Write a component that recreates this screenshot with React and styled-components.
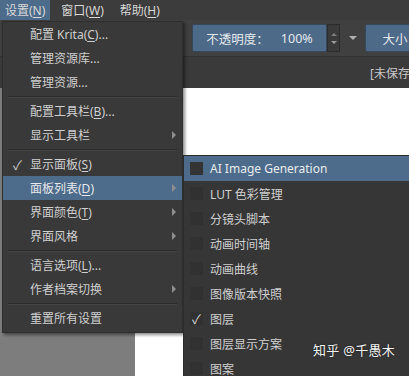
import React from 'react';
import styled, { createGlobalStyle } from 'styled-components';

const GlobalStyle = createGlobalStyle`
  html, body {
    margin: 0;
    padding: 0;
    background: #3c3c3c;
  }
  body {
    font-family: "Noto Sans", "Noto Sans CJK SC", sans-serif;
    font-size: 12px;
    color: #d2d2d2;
  }
`;

const Screen = styled.div`
  position: relative;
  width: 409px;
  height: 376px;
  overflow: hidden;
  display: flex;
  flex-direction: column;
  background: #3c3c3c;
`;

const MenuBar = styled.div`
  height: 20px;
  display: flex;
  align-items: stretch;
  gap: 6px;
  background: #3c3c3c;
`;

const MenuBarItem = styled.div`
  display: flex;
  align-items: center;
  padding: 0 5px;
  background: ${p => (p.$active ? '#4d6b8a' : 'transparent')};
  color: #d8d8d8;
  white-space: nowrap;
`;

const Key = styled.span`
  text-decoration: underline;
  text-underline-offset: 2px;
`;

const Toolbar = styled.div`
  height: 37px;
  display: flex;
  align-items: center;
  padding-left: 192px;
  background: #404040;
  border-bottom: 1px solid #333;
  box-sizing: border-box;
`;

const Field = styled.div`
  height: 28px;
  width: ${p => p.$width}px;
  flex-shrink: 0;
  box-sizing: border-box;
  display: flex;
  align-items: center;
  justify-content: center;
  gap: 12px;
  background: #4d6a89;
  border: 1px solid #36485c;
  border-radius: 2px;
  color: #e4e8ec;
  font-size: 12.5px;
  white-space: nowrap;
`;

const Spinner = styled.div`
  width: 13px;
  height: 28px;
  flex-shrink: 0;
  box-sizing: border-box;
  background: #3a3a3a;
  border: 1px solid #2c2c2c;
  display: flex;
  flex-direction: column;
  align-items: center;
  justify-content: space-around;
  padding: 5px 0;
`;

const DropSlot = styled.div`
  width: 25px;
  flex-shrink: 0;
  display: flex;
  justify-content: center;
`;

const Tri = styled.div`
  width: 0;
  height: 0;
  border-left: ${p => p.$s || 4}px solid transparent;
  border-right: ${p => p.$s || 4}px solid transparent;
  ${p => (p.$up ? 'border-bottom' : 'border-top')}: ${p => p.$s || 4}px solid ${p => p.$color || '#8a8a8a'};
`;

const TabRow = styled.div`
  height: 31px;
  display: flex;
  align-items: center;
  padding-left: 370px;
  background: #3a3a3a;
  color: #c8c8c8;
  white-space: nowrap;
  overflow: hidden;
`;

const CanvasArea = styled.div`
  flex: 1;
  display: flex;
`;

const Backdrop = styled.div`
  width: 135px;
  background: #7d7d7d;
`;

const Paper = styled.div`
  flex: 1;
  background: #ffffff;
`;

const Menu = styled.div`
  position: absolute;
  left: 2px;
  top: 21px;
  width: 181px;
  box-sizing: border-box;
  background: #393939;
  border: 1px solid #2e2e2e;
  box-shadow: 2px 2px 3px rgba(0, 0, 0, 0.45);
  padding-bottom: 2px;
  display: flex;
  flex-direction: column;
`;

const Item = styled.div`
  height: 24px;
  display: flex;
  align-items: center;
  padding-left: 27px;
  padding-right: 6px;
  position: relative;
  background: ${p => (p.$active ? '#4d6b8a' : 'transparent')};
  color: ${p => (p.$active ? '#e6e9ec' : '#cfcfcf')};
  white-space: nowrap;
`;

const Label = styled.span`
  flex: 1;
`;

const Check = styled.span`
  position: absolute;
  left: 10px;
  color: #c8c8c8;
  font-size: 13px;
`;

const Arrow = styled.div`
  width: 0;
  height: 0;
  border-top: 4px solid transparent;
  border-bottom: 4px solid transparent;
  border-left: 4px solid #8f8f8f;
`;

const Separator = styled.div`
  height: 5px;
  display: flex;
  align-items: center;
  padding: 0 5px;

  &::after {
    content: '';
    flex: 1;
    height: 1px;
    background: #2a2a2a;
    box-shadow: 0 1px 0 #444;
  }
`;

const SubMenu = styled.div`
  position: absolute;
  left: 183px;
  top: 155px;
  width: 240px;
  height: 240px;
  box-sizing: border-box;
  background: #363636;
  border-top: 1px solid #2c2c2c;
  border-left: 1px solid #2c2c2c;
  display: flex;
  flex-direction: column;
`;

const SubItem = styled.div`
  height: 25px;
  display: flex;
  align-items: center;
  gap: 7px;
  padding-left: 6px;
  background: ${p => (p.$active ? '#4d6b8a' : 'transparent')};
  color: ${p => (p.$active ? '#e8ebee' : '#cfcfcf')};
  white-space: nowrap;
`;

const Box = styled.div`
  width: 13px;
  height: 13px;
  flex-shrink: 0;
  display: flex;
  align-items: center;
  justify-content: center;
  background: ${p => (p.$active ? '#343434' : '#313131')};
  color: #cfcfcf;
  font-size: 13px;
`;

const Watermark = styled.div`
  position: absolute;
  left: 313px;
  top: 340px;
  color: #f4f4f4;
  font-size: 13px;
  letter-spacing: 0.3px;
  text-shadow: 0 0 2px rgba(0, 0, 0, 0.5);
  white-space: nowrap;
`;

const mainItems = [
  { label: <>配置 Krita(<Key>C</Key>)...</> },
  { label: '管理资源库...' },
  { label: '管理资源...' },
  { sep: true },
  { label: <>配置工具栏(<Key>B</Key>)...</> },
  { label: '显示工具栏', sub: true },
  { sep: true },
  { label: <>显示面板(<Key>S</Key>)</>, checked: true },
  { label: <>面板列表(<Key>D</Key>)</>, sub: true, active: true },
  { label: <>界面颜色(<Key>T</Key>)</>, sub: true },
  { label: '界面风格', sub: true },
  { sep: true },
  { label: <>语言选项(<Key>L</Key>)...</> },
  { label: '作者档案切换', sub: true },
  { sep: true },
  { label: '重置所有设置' },
];

const dockers = [
  { label: 'AI Image Generation', active: true },
  { label: 'LUT 色彩管理' },
  { label: '分镜头脚本' },
  { label: '动画时间轴' },
  { label: '动画曲线' },
  { label: '图像版本快照' },
  { label: '图层', checked: true },
  { label: '图层显示方案' },
  { label: '图案' },
];

const App = () => {
  return (
    <>
      <GlobalStyle />
      <Screen>
        <MenuBar>
          <MenuBarItem $active>设置(<Key>N</Key>)</MenuBarItem>
          <MenuBarItem>窗口(<Key>W</Key>)</MenuBarItem>
          <MenuBarItem>帮助(<Key>H</Key>)</MenuBarItem>
        </MenuBar>

        <Toolbar>
          <Field $width={135}>
            <span>不透明度：</span>
            <span>100%</span>
          </Field>
          <Spinner>
            <Tri $up $s={3} $color="#7a7a7a" />
            <Tri $s={3} $color="#9a9a9a" />
          </Spinner>
          <DropSlot>
            <Tri $s={4} $color="#b0b0b0" />
          </DropSlot>
          <Field $width={60}>大小</Field>
        </Toolbar>

        <TabRow>[未保存]</TabRow>

        <CanvasArea>
          <Backdrop />
          <Paper />
        </CanvasArea>

        <Menu>
          {mainItems.map((it, i) =>
            it.sep ? (
              <Separator key={i} />
            ) : (
              <Item key={i} $active={it.active}>
                {it.checked && <Check>✓</Check>}
                <Label>{it.label}</Label>
                {it.sub && <Arrow />}
              </Item>
            )
          )}
        </Menu>

        <SubMenu>
          {dockers.map(d => (
            <SubItem key={d.label} $active={d.active}>
              <Box $active={d.active}>{d.checked ? '✓' : ''}</Box>
              <span>{d.label}</span>
            </SubItem>
          ))}
        </SubMenu>

        <Watermark>知乎 @千愚木</Watermark>
      </Screen>
    </>
  );
};

export default App;
